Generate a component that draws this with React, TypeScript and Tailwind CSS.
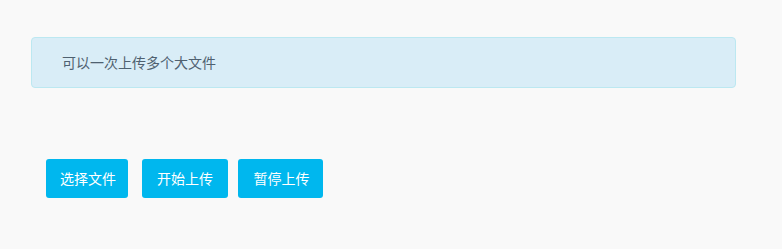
export default function App() {
  return (
    <div
      className="min-h-[249px] w-full bg-[#f9f9f9] pt-[37px] pl-[31px]"
      style={{ fontFamily: '"Microsoft YaHei", "Noto Sans CJK SC", sans-serif' }}
    >
      <div className="flex h-[51px] w-[705px] items-center rounded-[4px] border border-[#bce8f1] bg-[#d9edf7] pl-[30px] text-[14px] text-[#4f6170]">
        可以一次上传多个大文件
      </div>
      <div className="mt-[71px] flex pl-[15px]">
        <button className="h-[39px] w-[82px] rounded-[3px] bg-[#00b7ee] pl-[2px] text-[14px] text-white">选择文件</button>
        <button className="ml-[14px] h-[39px] w-[86px] rounded-[3px] bg-[#00b7ee] text-[14px] text-white">开始上传</button>
        <button className="ml-[10px] h-[39px] w-[85px] rounded-[3px] bg-[#00b7ee] pl-[2px] text-[14px] text-white">暂停上传</button>
      </div>
    </div>
  )
}
